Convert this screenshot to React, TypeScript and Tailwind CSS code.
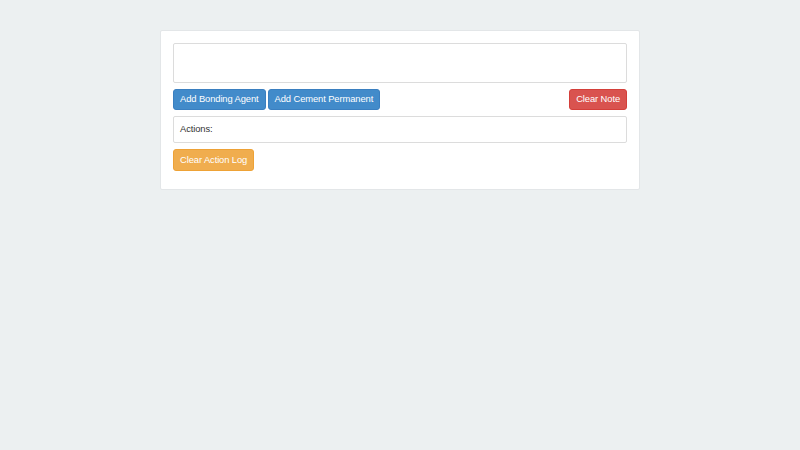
export default function App() {
  return (
    <div className="min-h-[450px] w-full bg-[#ecf0f1] pt-[30px] font-['Liberation_Sans',Arial,sans-serif] text-[9.4px] tracking-[-0.1px] text-[#333]">
      <div className="mx-auto w-[480px] rounded-[2px] border border-[#e3e6e8] bg-white px-[12px] pt-[12px] pb-[18px]">
        <textarea className="block h-[40px] w-full resize-none rounded-[2px] border border-[#dcdcdc] bg-white outline-none" />
        <div className="mt-[6px] flex items-center">
          <button className="h-[21px] rounded-[3px] border border-[#3a7fc0] bg-[#428bca] px-[6px] text-white">
            Add Bonding Agent
          </button>
          <button className="ml-[2px] h-[21px] rounded-[3px] border border-[#3a7fc0] bg-[#428bca] px-[6px] text-white">
            Add Cement Permanent
          </button>
          <button className="ml-auto h-[21px] rounded-[3px] border border-[#d43f3a] bg-[#d9534f] px-[6px] text-white">
            Clear Note
          </button>
        </div>
        <div className="mt-[6px] flex h-[27px] items-center rounded-[2px] border border-[#dcdcdc] px-[6px]">
          Actions:
        </div>
        <button className="mt-[6px] h-[22px] rounded-[3px] border border-[#eea236] bg-[#f0ad4e] px-[6px] text-white">
          Clear Action Log
        </button>
      </div>
    </div>
  );
}
